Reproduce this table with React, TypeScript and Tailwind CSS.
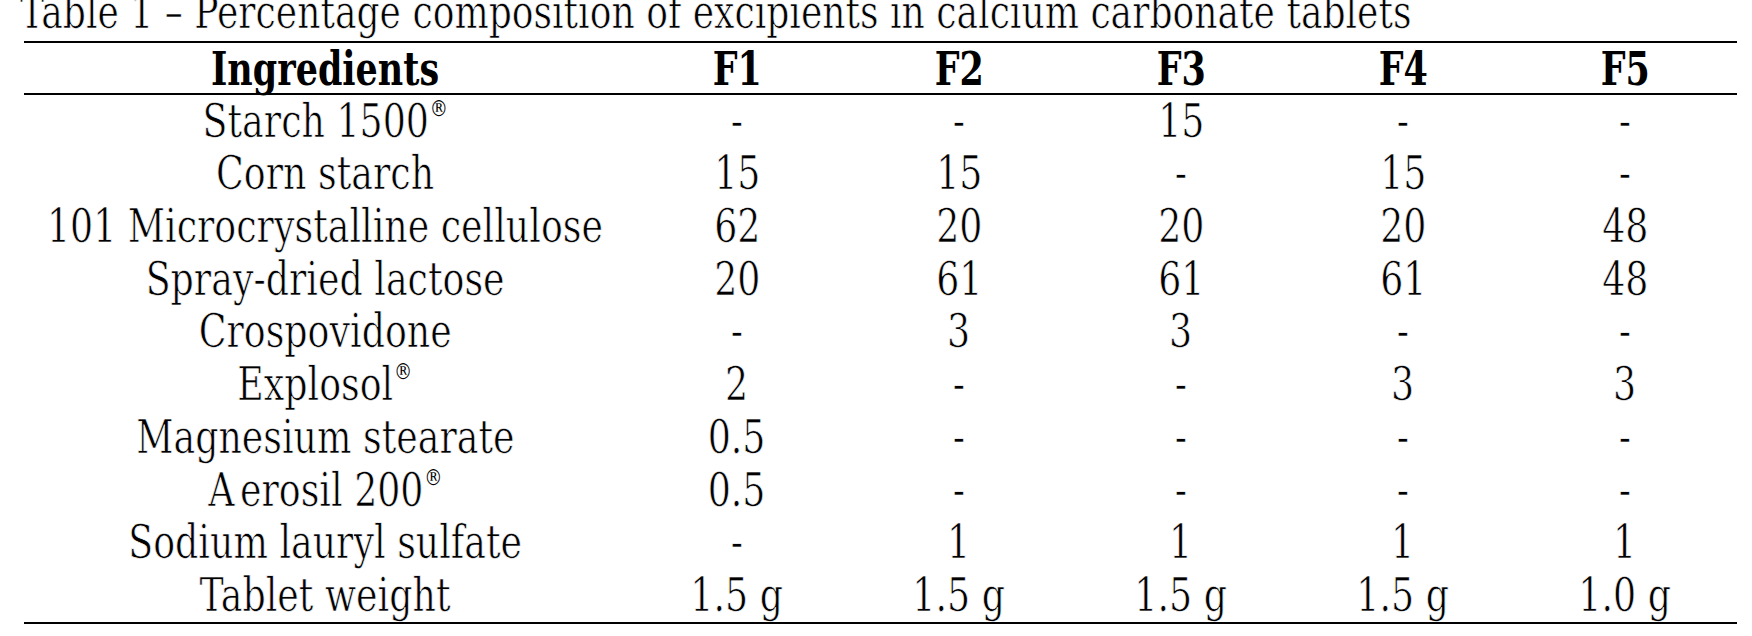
import React from "react";

// Fila de la tabla: nombre del ingrediente y valores F1..F5
interface Row {
  name: React.ReactNode;
  values: string[];
}

const Reg = () => (
  <span className="text-[23px] leading-none align-[21px] ml-[1px] [-webkit-text-stroke:0px]">®</span>
);

const rows: Row[] = [
  { name: <>Starch 1500<Reg /></>, values: ["-", "-", "15", "-", "-"] },
  { name: "Corn starch", values: ["15", "15", "-", "15", "-"] },
  { name: "101 Microcrystalline cellulose", values: ["62", "20", "20", "20", "48"] },
  { name: "Spray-dried lactose", values: ["20", "61", "61", "61", "48"] },
  { name: "Crospovidone", values: ["-", "3", "3", "-", "-"] },
  { name: <>Explosol<Reg /></>, values: ["2", "-", "-", "3", "3"] },
  { name: "Magnesium stearate", values: ["0.5", "-", "-", "-", "-"] },
  {
    name: (
      <>
        A<span className="ml-[7px]">erosil 200</span>
        <Reg />
      </>
    ),
    values: ["0.5", "-", "-", "-", "-"],
  },
  { name: "Sodium lauryl sulfate", values: ["-", "1", "1", "1", "1"] },
  { name: "Tablet weight", values: ["1.5 g", "1.5 g", "1.5 g", "1.5 g", "1.0 g"] },
];

const Cell: React.FC<{ children: React.ReactNode; bold?: boolean }> = ({ children, bold }) => (
  <div className="flex justify-center">
    <span
      className={`inline-block whitespace-nowrap ${
        bold ? "font-bold scale-x-[0.76]" : "scale-x-[0.79] [-webkit-text-stroke:0.7px_white]"
      }`}
    >
      {children}
    </span>
  </div>
);

const App: React.FC = () => {
  return (
    <div className="w-[1752px] h-[636px] overflow-hidden bg-white text-black pl-[24px] font-['DejaVu_Serif',serif] text-[46px] leading-[52.7px]">
      {/* Título */}
      <div className="-mt-[14px] -ml-[4px] whitespace-nowrap">
        <span className="inline-block origin-left scale-x-[0.785] [-webkit-text-stroke:0.7px_white]">
          Table 1 – Percentage composition of excipients in calcium carbonate tablets
        </span>
      </div>

      {/* Tabla */}
      <div className="mt-[2px] w-[1713px] border-t-2 border-b-2 border-black">
        <div className="grid grid-cols-[602px_repeat(5,222px)] h-[52px] border-b-2 border-black">
          <Cell bold>Ingredients</Cell>
          {["F1", "F2", "F3", "F4", "F5"].map((f) => (
            <Cell key={f} bold>
              {f}
            </Cell>
          ))}
        </div>
        {rows.map((r, i) => (
          <div key={i} className="grid grid-cols-[602px_repeat(5,222px)] h-[52.7px]">
            <Cell>{r.name}</Cell>
            {r.values.map((v, j) => (
              <Cell key={j}>{v}</Cell>
            ))}
          </div>
        ))}
      </div>
    </div>
  );
};

export default App;
